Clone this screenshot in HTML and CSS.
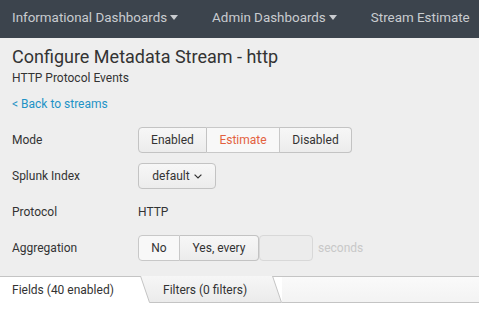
FILE: index.html
```html
<!DOCTYPE html>
<html>
<head>
<meta charset="utf-8">
<link rel="stylesheet" href="styles.css">
</head>
<body>
<nav class="nav">
  <span class="nav-item">Informational Dashboards<svg class="caret" width="8" height="5" viewBox="0 0 8 5"><path d="M0 0H8L4 5Z" fill="#c9ccd0"/></svg></span>
  <span class="nav-item">Admin Dashboards<svg class="caret" width="8" height="5" viewBox="0 0 8 5"><path d="M0 0H8L4 5Z" fill="#c9ccd0"/></svg></span>
  <span class="nav-item">Stream Estimate</span>
</nav>
<main class="content">
  <h1 class="title">Configure Metadata Stream - http</h1>
  <div class="subtitle">HTTP Protocol Events</div>
  <a class="back" href="#">&lt; Back to streams</a>
  <div class="form">
    <div class="label">Mode</div>
    <div class="control">
      <div class="btn-group">
        <span class="btn">Enabled</span><span class="btn active estimate">Estimate</span><span class="btn">Disabled</span>
      </div>
    </div>
    <div class="label">Splunk Index</div>
    <div class="control">
      <span class="btn dropdown">default<svg class="chev" width="8" height="5" viewBox="0 0 8 5"><path d="M0.6 0.6L4 4L7.4 0.6" fill="none" stroke="#333" stroke-width="1.2"/></svg></span>
    </div>
    <div class="label">Protocol</div>
    <div class="control"><span class="value">HTTP</span></div>
    <div class="label">Aggregation</div>
    <div class="control">
      <div class="btn-group">
        <span class="btn active no">No</span><span class="btn yes">Yes, every</span><span class="input"></span>
      </div>
      <span class="unit">seconds</span>
    </div>
  </div>
</main>
<div class="tabs">
  <div class="tab tab-active">Fields (40 enabled)</div>
  <div class="tab tab-inactive"><svg class="tab-shape" width="142" height="27" viewBox="0 0 142 27" preserveAspectRatio="none"><defs><linearGradient id="g" x1="0" y1="0" x2="0" y2="1"><stop offset="0" stop-color="#f6f6f6"/><stop offset="1" stop-color="#ebebeb"/></linearGradient></defs><path d="M0.5 0 L9.5 26.5 L141.5 26.5 L132.5 0" fill="url(#g)" stroke="#c4c4c4" stroke-width="1"/></svg><span class="tab-label">Filters (0 filters)</span></div>
  <div class="tab-rest"></div>
</div>
<div class="below"></div>
</body>
</html>
```
FILE: styles.css
```css
html, body {
  margin: 0;
  padding: 0;
  background: #ffffff;
  font-family: Roboto, "Liberation Sans", sans-serif;
  color: #333;
}
.nav {
  height: 38px;
  background: #3c444d;
  display: flex;
  align-items: center;
  padding: 0 0 0 12px;
  gap: 32px;
  white-space: nowrap;
  overflow: hidden;
}
.nav-item {
  color: #c9ccd0;
  font-size: 13.4px;
  display: flex;
  align-items: center;
  margin-top: -4px;
}
.caret {
  margin-left: 3px;
  margin-right: 2px;
  margin-top: 1px;
}
.content {
  background: #eeeeee;
  padding: 7px 12px 15px;
}
.title {
  margin: 0;
  font-size: 18px;
  font-weight: 400;
  line-height: 24px;
  color: #333;
}
.subtitle {
  font-size: 12px;
  line-height: 16px;
  margin-top: 1px;
}
.back {
  display: inline-block;
  margin-top: 10px;
  font-size: 12px;
  line-height: 16px;
  color: #1e93c6;
  text-decoration: none;
}
.form {
  display: grid;
  grid-template-columns: 126px auto;
  grid-auto-rows: 26px;
  row-gap: 10px;
  margin-top: 15px;
  align-items: center;
  font-size: 12px;
}
.control {
  display: flex;
  align-items: center;
}
.btn-group {
  display: flex;
}
.btn {
  display: inline-flex;
  align-items: center;
  justify-content: center;
  height: 24px;
  border: 1px solid #c3c3c3;
  background: linear-gradient(#f7f7f7, #ececec);
  color: #333;
  font-size: 12px;
  box-sizing: content-box;
}
.btn-group .btn + .btn,
.btn-group .btn + .input {
  border-left: none;
}
.btn-group .btn:first-child {
  border-radius: 4px 0 0 4px;
}
.btn-group .btn:last-child {
  border-radius: 0 4px 4px 0;
}
.btn-group .btn:nth-child(1) { width: 67px; }
.btn-group .btn:nth-child(2) { width: 72px; }
.btn-group .btn:nth-child(3) { width: 71px; }
.btn.active {
  background: #f8f8f8;
  border-color: #c8c8c8;
}
.btn.estimate {
  color: #e3613e;
}
.btn-group .btn.no { width: 40px; }
.btn-group .btn.yes { width: 78px; border-radius: 0 4px 4px 0; }
.dropdown {
  width: 76px;
  border-radius: 4px;
}
.chev {
  margin-left: 4px;
  margin-top: 1px;
}
.input {
  display: inline-block;
  width: 52px;
  height: 24px;
  border: 1px solid #d8d8d8;
  border-radius: 4px;
  background: #ececec;
  margin-left: 0;
}
.btn-group .btn.yes + .input {
  border-left: 1px solid #d8d8d8;
}
.unit {
  color: #c8c8c8;
  margin-left: 5px;
  font-size: 12px;
}
.value {
  color: #333;
}
.tabs {
  display: flex;
  height: 26px;
  border-top: 1px solid #c4c4c4;
  background: #ffffff;
  font-size: 12px;
}
.tab {
  position: relative;
  display: flex;
  align-items: center;
}
.tab-active {
  width: 128px;
  padding-left: 12px;
  background: #fff;
}
.tab-inactive {
  width: 142px;
  margin-top: -1px;
  height: 27px;
}
.tab-shape {
  position: absolute;
  left: 0;
  top: 0;
}
.tab-label {
  position: relative;
  padding-left: 23px;
  color: #333;
}
.tab-rest {
  flex: 1;
  border-bottom: 1px solid #c4c4c4;
  background: linear-gradient(#fafafa, #f3f3f3);
}
```
